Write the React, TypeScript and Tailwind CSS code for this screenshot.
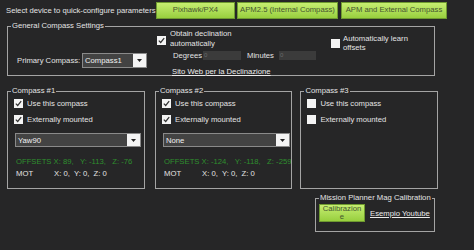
import React from "react";

/**
 * Compass setup panel (Mission Planner style).
 */

function Check({ checked }: { checked?: boolean }) {
  return (
    <span className="w-[9px] h-[9px] bg-[#f4f4f4] flex items-center justify-center shrink-0">
      {checked && (
        <svg width="7" height="7" viewBox="0 0 7 7">
          <path d="M0.8 3.6 L2.7 5.5 L6.2 1.2" fill="none" stroke="#333" strokeWidth="1.2" />
        </svg>
      )}
    </span>
  );
}

function Select({ value, className }: { value: string; className: string }) {
  return (
    <div className={`flex items-stretch bg-[#434343] border border-[#8a8a8a] ${className}`}>
      <span className="flex-1 flex items-center pl-[2px] text-[#f2f2f2]">{value}</span>
      <span className="w-[13px] bg-[#f4f4f4] flex items-center justify-center">
        <svg width="5" height="3" viewBox="0 0 5 3">
          <path d="M0 0 H5 L2.5 3 Z" fill="#222" />
        </svg>
      </span>
    </div>
  );
}

function GreenButton({ children, className }: { children: React.ReactNode; className: string }) {
  return (
    <div
      className={`flex items-center justify-center text-center bg-gradient-to-b from-[#c6ee70] to-[#98cf3e] border border-[#6f9a30] text-[#45552f] leading-[8px] ${className}`}
    >
      {children}
    </div>
  );
}

function Group({
  title,
  className,
  children,
}: {
  title: string;
  className: string;
  children?: React.ReactNode;
}) {
  return (
    <fieldset className={`border border-[#a4a4a4] ${className}`}>
      <legend className="ml-[3px] px-[1px] leading-[10px]">{title}</legend>
      {children}
    </fieldset>
  );
}

function CompassBox({
  n,
  checked,
  orient,
  offsets,
  className,
  selectWidth,
}: {
  n: number;
  checked: boolean;
  orient?: string;
  offsets?: string;
  className: string;
  selectWidth: string;
}) {
  return (
    <Group title={`Compass #${n}`} className={`h-[103px] ${className}`}>
      <div className="flex flex-col pl-[6px] pt-[2px] overflow-hidden whitespace-nowrap">
        <div className="flex items-center gap-[4px] h-[11px]">
          <Check checked={checked} />
          <span>Use this compass</span>
        </div>
        <div className="flex items-center gap-[4px] h-[11px] mt-[5px]">
          <Check checked={checked} />
          <span>Externally mounted</span>
        </div>
        {orient && <Select value={orient} className={`mt-[8px] h-[14px] ml-[1px] ${selectWidth}`} />}
        {offsets && (
          <>
            <div className="mt-[10px] pl-[2px] h-[9px] leading-[9px] text-[#2e8f2e] whitespace-pre">{offsets}</div>
            <div className="mt-[3px] pl-[2px] h-[9px] leading-[9px] flex">
              <span className="w-[38px]">MOT</span>
              <span className="whitespace-pre">X: 0,  Y: 0,  Z: 0</span>
            </div>
          </>
        )}
      </div>
    </Group>
  );
}

export default function App() {
  return (
    <div
      className="w-[474px] h-[250px] bg-[#262627] text-[#e4e4e4] text-[7.7px] leading-[9px] overflow-hidden"
      style={{ fontFamily: '"Liberation Sans", Arial, sans-serif' }}
    >
      {/* Top bar */}
      <div className="flex items-center h-[21px] pl-[6px] pb-[1px]">
        <span className="w-[150px]">Select device to quick-configure parameters</span>
        <GreenButton className="w-[79px] h-[17px]">Pixhawk/PX4</GreenButton>
        <GreenButton className="w-[101px] h-[17px] ml-[2px]">APM2.5 (Internal Compass)</GreenButton>
        <GreenButton className="w-[106px] h-[17px] ml-[3px]">APM and External Compass</GreenButton>
      </div>

      {/* General settings */}
      <Group title="General Compass Settings" className="ml-[7px] w-[428px] h-[55px]">
        <div className="flex items-start pl-[9px]">
          <div className="w-[140px] pt-[22px] flex items-center">
            <span className="w-[65px]">Primary Compass:</span>
            <Select value="Compass1" className="w-[65px] h-[15px]" />
          </div>
          <div className="w-[174px] flex flex-col">
            <div className="flex items-start">
              <span className="mt-[5px]">
                <Check checked />
              </span>
              <div className="h-[19px] overflow-hidden ml-[4px]">
                <div className="-mt-[2px] leading-[10px]">
                  Obtain declination
                  <br />
                  automatically
                </div>
              </div>
            </div>
            <div className="flex items-center h-[10px] pl-[16px]">
              <span className="w-[30px]">Degrees</span>
              <span className="w-[38px] h-[9px] bg-[#3b3b3b] text-[#6a6a6a] text-[6px] leading-[9px] pl-[1px]">0</span>
              <span className="ml-[6px] w-[32px]">Minutes</span>
              <span className="w-[37px] h-[9px] bg-[#3b3b3b] text-[#6a6a6a] text-[6px] leading-[9px] pl-[1px]">0</span>
            </div>
            <a className="mt-[7px] pl-[15px] underline text-[#ececec]">Sito Web per la Declinazione</a>
          </div>
          <div className="flex items-start mt-[3px]">
            <span className="mt-[5px]">
              <Check />
            </span>
            <span className="ml-[3px]">
              Automatically learn
              <br />
              offsets
            </span>
          </div>
        </div>
      </Group>

      {/* Compass boxes */}
      <div className="flex mt-[10px] ml-[7px]">
        <CompassBox
          n={1}
          checked
          orient="Yaw90"
          offsets="OFFSETS X: 89,   Y: -113,   Z: -76"
          className="w-[138px]"
          selectWidth="w-[126px]"
        />
        <CompassBox
          n={2}
          checked
          orient="None"
          offsets="OFFSETS X: -124,   Y: -118,   Z: -259"
          className="w-[133px] ml-[10px]"
          selectWidth="w-[127px]"
        />
        <CompassBox n={3} checked={false} className="w-[138px] ml-[8px]" selectWidth="" />
      </div>

      {/* Mag calibration */}
      <Group title="Mission Planner Mag Calibration" className="ml-[315px] mt-[4px] w-[120px] h-[39px]">
        <div className="flex items-center pl-[3px] pt-[1px]">
          <GreenButton className="w-[46px] h-[18px]">
            Calibrazion
            <br />e
          </GreenButton>
          <a className="ml-[5px] underline text-[#ececec]">Esempio Youtube</a>
        </div>
      </Group>
    </div>
  );
}
